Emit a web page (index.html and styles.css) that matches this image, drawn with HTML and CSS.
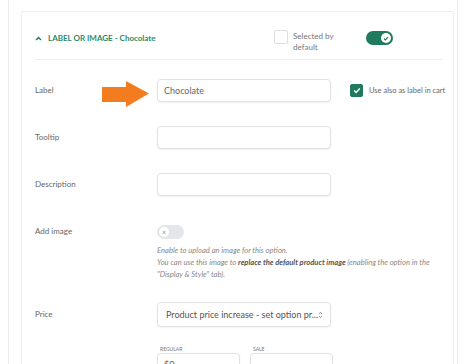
FILE: index.html
```html
<!DOCTYPE html>
<html lang="en">

<head>
    <meta charset="UTF-8">
    <meta name="viewport" content="width=device-width, initial-scale=1.0">
    <title>Option - Label or Image</title>
    <link rel="stylesheet" href="styles.css">
</head>

<body>
    <div class="wrap">
        <div class="option-card">
            <div class="option-head">
                <div class="option-title">
                    <svg class="chevron" width="7" height="5" viewBox="0 0 7 5"><path d="M1 4 L3.5 1.5 L6 4" fill="none" stroke="#1f7a5e" stroke-width="1.4"/></svg>
                    <span>LABEL OR IMAGE - Chocolate</span>
                </div>
                <div class="head-side">
                    <label class="default-check">
                        <span class="box"></span>
                        <span class="default-text">Selected by default</span>
                    </label>
                    <span class="toggle on">
                        <span class="knob">
                            <svg width="6" height="5" viewBox="0 0 6 5"><path d="M1 2.6 L2.4 3.9 L5 1.2" fill="none" stroke="#1d6f57" stroke-width="1.1"/></svg>
                        </span>
                    </span>
                </div>
            </div>

            <div class="option-body">
                <div class="row">
                    <div class="row-label">Label</div>
                    <div class="row-field inline">
                        <div class="input">Chocolate</div>
                        <label class="cart-check">
                            <span class="box checked">
                                <svg width="8" height="7" viewBox="0 0 8 7"><path d="M1.2 3.6 L3.1 5.4 L6.8 1.6" fill="none" stroke="#fff" stroke-width="1.4"/></svg>
                            </span>
                            Use also as label in cart
                        </label>
                    </div>
                    <svg class="pointer" width="48" height="28" viewBox="0 0 48 28"><path d="M0 7 H24 V1 L47 13.5 L24 27 V22 H0 Z" fill="#f47c20"/></svg>
                </div>

                <div class="row">
                    <div class="row-label">Tooltip</div>
                    <div class="row-field"><div class="input"></div></div>
                </div>

                <div class="row">
                    <div class="row-label">Description</div>
                    <div class="row-field"><div class="input"></div></div>
                </div>

                <div class="row image-row">
                    <div class="row-label">Add image</div>
                    <div class="row-field">
                        <span class="toggle off">
                            <span class="knob">&times;</span>
                        </span>
                        <p class="help">
                            Enable to upload an image for this option.<br>
                            You can use this image to <b>replace the default product image</b> (enabling the option in the "Display &amp; Style" tab).
                        </p>
                    </div>
                </div>

                <div class="row price-row">
                    <div class="row-label">Price</div>
                    <div class="row-field">
                        <div class="select">
                            <span>Product price increase - set option pr...</span>
                            <svg width="5" height="8" viewBox="0 0 5 8"><path d="M1 3 L2.5 1.3 L4 3 M1 5 L2.5 6.7 L4 5" fill="none" stroke="#777" stroke-width="0.8"/></svg>
                        </div>
                        <div class="prices">
                            <div class="price">
                                <span class="price-label">REGULAR</span>
                                <div class="input small">$0</div>
                            </div>
                            <div class="price">
                                <span class="price-label">SALE</span>
                                <div class="input small"></div>
                            </div>
                        </div>
                    </div>
                </div>
            </div>
        </div>
    </div>
</body>

</html>
```

FILE: styles.css
```css
body, html {
    margin: 0;
    padding: 0;
    background: #fff;
    font-family: Lato, 'Open Sans', sans-serif;
    color: #555;
    overflow: hidden;
}

.wrap {
    margin-left: 8px;
    width: 450px;
    height: 364px;
    border-left: 1px solid #ececec;
    border-right: 1px solid #ececec;
    padding: 11px 3px 0 12px;
    box-sizing: border-box;
}

.option-card {
    border: 1px solid #efefef;
    border-bottom: none;
    padding: 0 10px 0 13px;
    height: 400px;
}

.option-head {
    display: flex;
    align-items: flex-start;
    height: 48px;
    padding-top: 18px;
    box-sizing: border-box;
    border-bottom: 1px solid #efefef;
}

.option-title {
    display: flex;
    align-items: center;
    gap: 6px;
    color: #2a8a68;
    font-size: 8px;
    font-weight: bold;
    margin-top: 3px;
}

.head-side {
    display: flex;
    margin-left: auto;
    margin-right: 50px;
}

.default-check {
    display: flex;
    gap: 5px;
    width: 72px;
}

.box {
    width: 14px;
    height: 14px;
    flex: none;
    border: 1px solid #dedede;
    border-radius: 2px;
    background: #fff;
    box-sizing: border-box;
}

.default-text {
    width: 50px;
    font-size: 8px;
    line-height: 11px;
    color: #777;
    margin-top: 1px;
}

.toggle {
    display: flex;
    align-items: center;
    width: 27px;
    height: 14px;
    border-radius: 7px;
    padding: 2px;
    box-sizing: border-box;
    flex: none;
}

.toggle .knob {
    width: 10px;
    height: 10px;
    border-radius: 50%;
    background: #fff;
    display: flex;
    align-items: center;
    justify-content: center;
}

.toggle.on {
    background: #1f7a5e;
    justify-content: flex-end;
    margin-left: 20px;
    margin-top: 1px;
}

.toggle.off {
    background: #e3e6ea;
    font-size: 7px;
    color: #888;
    line-height: 1;
}

.option-body {
    padding-top: 19px;
    display: flex;
    flex-direction: column;
    gap: 24px;
}

.row {
    display: flex;
    position: relative;
}

.row-label {
    width: 122px;
    flex: none;
    font-size: 8px;
    line-height: 23px;
    color: #666;
}

.row-field.inline {
    display: flex;
    align-items: center;
    gap: 19px;
}

.input {
    width: 174px;
    height: 23px;
    border: 1px solid #e2e2e2;
    border-radius: 4px;
    box-shadow: 0 1px 2px rgba(0, 0, 0, 0.06);
    box-sizing: border-box;
    padding: 0 6px;
    font-size: 9px;
    line-height: 21px;
    color: #666;
    background: #fff;
}

.cart-check {
    display: flex;
    align-items: center;
    gap: 6px;
    font-size: 7.5px;
    color: #666;
    white-space: nowrap;
}

.box.checked {
    width: 13px;
    height: 13px;
    background: #1f7a5e;
    border-color: #1f7a5e;
    display: flex;
    align-items: center;
    justify-content: center;
}

.pointer {
    position: absolute;
    left: 67px;
    top: 1px;
}

.image-row {
    margin-top: 5px;
}

.image-row .row-label {
    line-height: 12px;
}

.help {
    margin: 5px 0 0;
    font-size: 7.6px;
    line-height: 12px;
    font-style: italic;
    color: #888;
    width: 285px;
}

.help b {
    color: #555;
}

.price-row {
    margin-top: -2px;
}

.price-row .row-label {
    line-height: 25px;
}

.select {
    width: 174px;
    height: 25px;
    border: 1px solid #e2e2e2;
    border-radius: 4px;
    box-shadow: 0 1px 2px rgba(0, 0, 0, 0.06);
    box-sizing: border-box;
    display: flex;
    align-items: center;
    justify-content: space-between;
    padding: 0 7px 0 8px;
    font-size: 9px;
    color: #555;
    white-space: nowrap;
}

.prices {
    display: flex;
    gap: 10px;
    margin-top: 19px;
}

.price {
    display: flex;
    flex-direction: column;
    gap: 1px;
}

.price-label {
    font-size: 5px;
    color: #777;
    padding-left: 3px;
    line-height: 6px;
}

.input.small {
    width: 83px;
    height: 23px;
}
```
